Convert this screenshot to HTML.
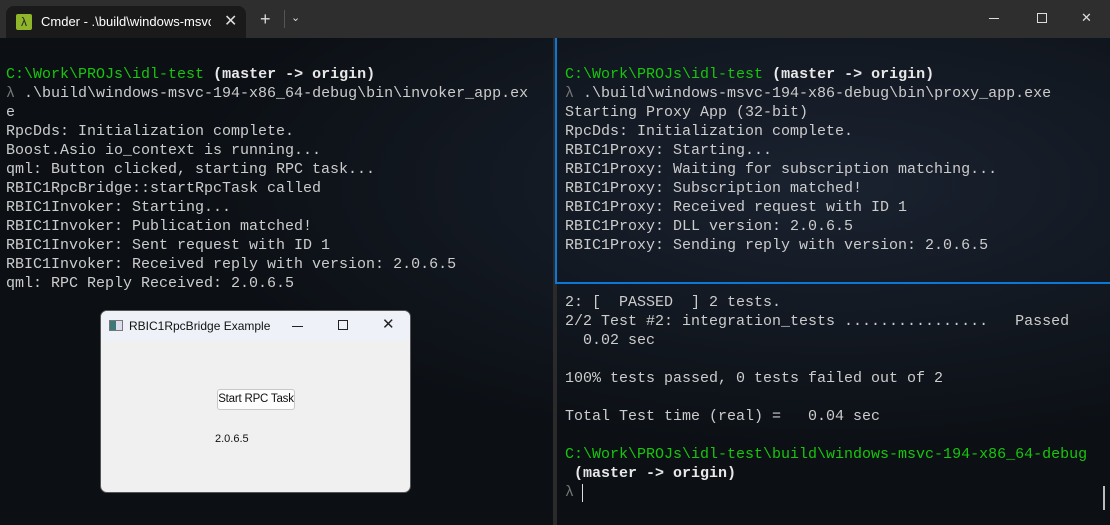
<!DOCTYPE html>
<html><head><meta charset="utf-8"><style>
*{margin:0;padding:0;box-sizing:border-box}
body{width:1110px;height:525px;overflow:hidden;background:#0c1015;position:relative;font-family:"Liberation Sans",sans-serif}
.tb{position:absolute;left:0;top:0;width:1110px;height:38px;background:#2e2e2e}
.tab{position:absolute;left:6px;top:6px;width:240px;height:32px;background:#1a1a1a;border-radius:8px 8px 0 0}
.term{position:absolute;font-family:"Liberation Mono",monospace;font-size:15px;line-height:19px;color:#cccccc;white-space:pre}
.g{color:#16c60c}.w{color:#e8e8e8;font-weight:bold}.l{color:#767676}
</style></head><body>
<div style="position:absolute;left:0;top:38px;width:1110px;height:487px;background:radial-gradient(ellipse at 75% 30%,#1a2230 0%,#0c1015 55%)"></div>
<div class="tb">
 <div class="tab">
  <div style="position:absolute;left:10px;top:8px;width:16px;height:16px;background:#8fb52a;border-radius:2px;color:#222;font-size:12px;text-align:center;line-height:16px">λ</div>
  <div style="position:absolute;left:35px;top:8px;color:#fff;font-size:13px;white-space:nowrap;width:170px;overflow:hidden">Cmder - .\build\windows-msvc</div>
  <div style="position:absolute;left:218px;top:5px;color:#ddd;font-size:16px">✕</div>
 </div>
 <div style="position:absolute;left:260px;top:9px;color:#ddd;font-size:18px">+</div>
 <div style="position:absolute;left:284px;top:10px;width:1px;height:18px;background:#555"></div>
 <div style="position:absolute;left:291px;top:11px;color:#ddd;font-size:11px">⌄</div>
 <div style="position:absolute;left:989px;top:18px;width:10px;height:1px;background:#ddd"></div>
 <div style="position:absolute;left:1037px;top:13px;width:10px;height:10px;border:1px solid #ddd"></div>
 <div style="position:absolute;left:1081px;top:10px;color:#ddd;font-size:13px">✕</div>
</div>
<div style="position:absolute;left:553px;top:38px;width:4px;height:487px;background:#2a2a2a"></div>
<div style="position:absolute;left:555px;top:38px;width:555px;height:246px;border-left:2px solid #0a78d4;border-bottom:2px solid #0a78d4"></div>
<div class="term" style="left:6px;top:65px"><span class="g">C:\Work\PROJs\idl-test</span> <span class="w">(master -&gt; origin)</span>
<span class="l">λ</span> .\build\windows-msvc-194-x86_64-debug\bin\invoker_app.ex
e
RpcDds: Initialization complete.
Boost.Asio io_context is running...
qml: Button clicked, starting RPC task...
RBIC1RpcBridge::startRpcTask called
RBIC1Invoker: Starting...
RBIC1Invoker: Publication matched!
RBIC1Invoker: Sent request with ID 1
RBIC1Invoker: Received reply with version: 2.0.6.5
qml: RPC Reply Received: 2.0.6.5</div>
<div class="term" style="left:565px;top:65px"><span class="g">C:\Work\PROJs\idl-test</span> <span class="w">(master -&gt; origin)</span>
<span class="l">λ</span> .\build\windows-msvc-194-x86-debug\bin\proxy_app.exe
Starting Proxy App (32-bit)
RpcDds: Initialization complete.
RBIC1Proxy: Starting...
RBIC1Proxy: Waiting for subscription matching...
RBIC1Proxy: Subscription matched!
RBIC1Proxy: Received request with ID 1
RBIC1Proxy: DLL version: 2.0.6.5
RBIC1Proxy: Sending reply with version: 2.0.6.5</div>
<div class="term" style="left:565px;top:293px">2: [  PASSED  ] 2 tests.
2/2 Test #2: integration_tests ................   Passed
  0.02 sec

100% tests passed, 0 tests failed out of 2

Total Test time (real) =   0.04 sec

<span class="g">C:\Work\PROJs\idl-test\build\windows-msvc-194-x86_64-debug</span>
 <span class="w">(master -&gt; origin)</span>
<span class="l">λ</span></div>
<div style="position:absolute;left:582px;top:484px;width:1px;height:18px;background:#ddd"></div>
<div style="position:absolute;left:1103px;top:486px;width:2px;height:24px;background:#bbb"></div>
<div style="position:absolute;left:100px;top:310px;width:311px;height:183px;background:#f0f0f0;border-radius:7px;border:1px solid #555;overflow:hidden">
 <div style="height:30px;background:#eef2f8;position:relative">
  <div style="position:absolute;left:8px;top:9px;width:14px;height:11px;border:1px solid #777;background:linear-gradient(90deg,#3c7a7a 50%,#dde 50%)"></div>
  <div style="position:absolute;left:28px;top:8px;font-size:12px;color:#111;white-space:nowrap">RBIC1RpcBridge Example</div>
  <div style="position:absolute;left:191px;top:15px;width:11px;height:1px;background:#222"></div>
  <div style="position:absolute;left:237px;top:9px;width:10px;height:10px;border:1px solid #222"></div>
  <div style="position:absolute;left:281px;top:4px;font-size:15px;color:#222">✕</div>
 </div>
 <div style="position:absolute;left:116px;top:78px;width:78px;height:21px;background:#fdfdfd;border:1px solid #c8c8c8;border-radius:3px;font-size:11.5px;line-height:19px;text-align:center;color:#111;white-space:nowrap;letter-spacing:-0.2px">Start RPC Task</div>
 <div style="position:absolute;left:114px;top:122px;font-size:11px;color:#111">2.0.6.5</div>
</div>
</body></html>
